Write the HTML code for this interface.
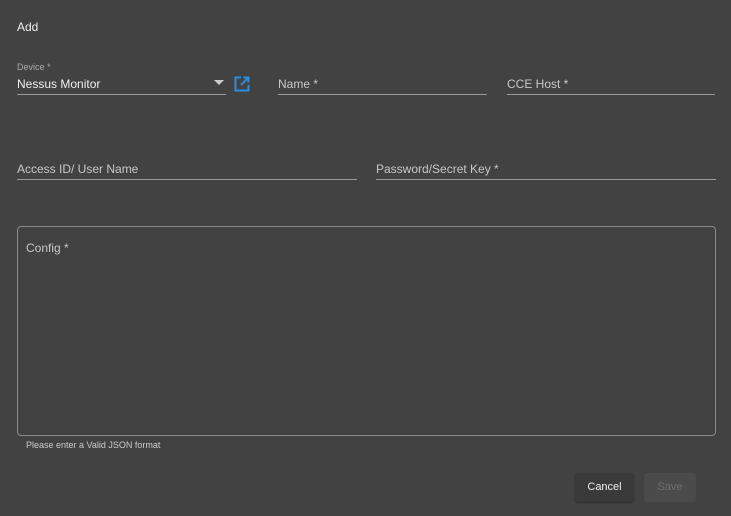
<!DOCTYPE html>
<html><head><style>
body{margin:0;width:731px;height:516px;background:#424242;font-family:"Liberation Sans",sans-serif;color:#ddd;position:relative;overflow:hidden}
.a{position:absolute}
.lbl{font-size:12px;color:#c8c8c8}
.line{position:absolute;height:1px;background:#9a9a9a}
</style></head><body>
<div class="a" style="left:17px;top:20px;font-size:12px;color:#eee">Add</div>
<div class="a" style="left:17px;top:62px;font-size:9px;color:#aaa">Device *</div>
<div class="a" style="left:17px;top:77px;font-size:12px;color:#f0f0f0">Nessus Monitor</div>
<div class="a" style="left:214px;top:80px;width:0;height:0;border-left:5px solid transparent;border-right:5px solid transparent;border-top:5px solid #ccc"></div>
<div class="line" style="left:17px;top:94px;width:209px"></div>
<svg class="a" style="left:234px;top:76px" width="16" height="16" viewBox="0 0 16 16"><path d="M7 1.5H1.5V14.5H14.5V9M9.5 1.5H14.5V6.5M14.5 1.5L7 9" fill="none" stroke="#2b8fe0" stroke-width="2"/></svg>
<div class="a lbl" style="left:278px;top:77px">Name *</div>
<div class="line" style="left:278px;top:94px;width:209px"></div>
<div class="a lbl" style="left:507px;top:77px">CCE Host *</div>
<div class="line" style="left:507px;top:94px;width:208px"></div>
<div class="a lbl" style="left:17px;top:162px">Access ID/ User Name</div>
<div class="line" style="left:17px;top:179px;width:340px"></div>
<div class="a lbl" style="left:376px;top:162px">Password/Secret Key *</div>
<div class="line" style="left:376px;top:179px;width:340px"></div>
<div class="a" style="left:17px;top:226px;width:697px;height:208px;border:1px solid #8a8a8a;border-radius:4px"></div>
<div class="a lbl" style="left:26px;top:241px">Config *</div>
<div class="a" style="left:26px;top:440px;font-size:9px;color:#ccc">Please enter a Valid JSON format</div>
<div class="a" style="left:575px;top:473px;width:59px;height:29px;background:#3a3a3a;border-radius:3px;box-shadow:0 1px 2px rgba(0,0,0,.3);font-size:11px;color:#eee;text-align:center;line-height:29px">Cancel</div>
<div class="a" style="left:644px;top:473px;width:52px;height:29px;background:#4b4b4b;border-radius:3px;font-size:11px;color:#6e6e6e;text-align:center;line-height:29px">Save</div>
</body></html>
